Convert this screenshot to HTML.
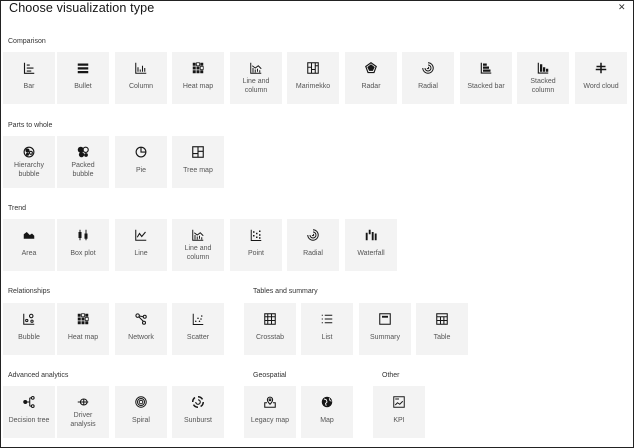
<!DOCTYPE html>
<html><head><meta charset="utf-8"><style>
*{margin:0;padding:0;box-sizing:border-box}
html,body{width:634px;height:448px;overflow:hidden;background:#fff}
body{position:relative;font-family:"Liberation Sans",sans-serif}
.b{position:absolute;left:0;top:0;width:634px;height:448px;border:1px solid #222}
.h{position:absolute;left:9px;top:1px;font-size:12.6px;color:#161616;letter-spacing:.1px}
.x{position:absolute;left:618px;top:2px;font-size:9px;color:#333}
.l{position:absolute;font-size:7px;color:#333}
.t{position:absolute;width:52px;height:52px;background:#f3f3f3}
.t svg{position:absolute;left:20px;top:10px;width:12px;height:12px}
.t span{position:absolute;left:0;right:0;top:30px;text-align:center;font-size:7px;line-height:9px;color:#555}
.t span.d{top:25px}
</style></head><body>
<div class="b"></div>
<div class="h">Choose visualization type</div>
<div class="x">✕</div>

<div class="l" style="left:8px;top:38px">Comparison</div>
<div class="t" style="left:3px;top:52px"><svg viewBox="0 0 16 16" fill="none" stroke="#161616" stroke-width="1.5"><path d="M2 1v14h13M5 4h4M5 8h9M5 12h6"/></svg><span>Bar</span></div>
<div class="t" style="left:57px;top:52px"><svg viewBox="0 0 16 16" fill="#161616"><rect x="1" y="2" width="14" height="3"/><rect x="1" y="7" width="14" height="3"/><rect x="1" y="12" width="14" height="3"/></svg><span>Bullet</span></div>
<div class="t" style="left:115px;top:52px"><svg viewBox="0 0 16 16" fill="none" stroke="#161616" stroke-width="1.4"><path d="M1 1v14h14M4 7v6M7 10v3M10 5v8M13 8v5"/></svg><span>Column</span></div>
<div class="t" style="left:172px;top:52px"><svg viewBox="0 0 16 16" fill="#161616"><rect x="1" y="1" width="4" height="4"/><rect x="6" y="1" width="4" height="4" fill="none" stroke="#161616"/><rect x="11" y="1" width="4" height="4"/><rect x="1" y="6" width="4" height="4"/><rect x="6" y="6" width="4" height="4"/><rect x="11" y="6" width="4" height="4" fill="none" stroke="#161616"/><rect x="1" y="11" width="4" height="4"/><rect x="6" y="11" width="4" height="4"/><rect x="11" y="11" width="4" height="4"/></svg><span>Heat map</span></div>
<div class="t" style="left:230px;top:52px"><svg viewBox="0 0 16 16" fill="none" stroke="#161616" stroke-width="1.3"><path d="M1 1v14h14M4 8v6M7 10v4M10 9v4M13 11v3M3 5l4 3 4-3 4 4"/></svg><span class="d">Line and<br>column</span></div>
<div class="t" style="left:287px;top:52px"><svg viewBox="0 0 16 16" fill="none" stroke="#161616" stroke-width="1.4"><rect x="1" y="1" width="14" height="14"/><path d="M6 1v14M11 1v14M1 7h5M6 10h5M11 5h4"/></svg><span>Marimekko</span></div>
<div class="t" style="left:345px;top:52px"><svg viewBox="0 0 16 16" fill="none" stroke="#161616" stroke-width="1.5"><path d="M8 1l7 5-3 8H4L1 6z"/><path d="M8 4l4 3-2 4H6L4 7z" fill="#161616"/></svg><span>Radar</span></div>
<div class="t" style="left:402px;top:52px"><svg viewBox="0 0 16 16" fill="none" stroke="#161616" stroke-width="1.3"><path d="M8 1a7 7 0 1 1-7 7M8 4a4 4 0 1 1-4 4M8 7a1 1 0 1 1-1 1"/></svg><span>Radial</span></div>
<div class="t" style="left:460px;top:52px"><svg viewBox="0 0 16 16" fill="#161616"><path d="M1 1h1.5v13H15v1.5H1z"/><rect x="4" y="2" width="5" height="3"/><rect x="4" y="6" width="8" height="3"/><rect x="4" y="10" width="10" height="3"/></svg><span>Stacked bar</span></div>
<div class="t" style="left:517px;top:52px"><svg viewBox="0 0 16 16" fill="#161616"><path d="M1 1h1.5v13H15v1.5H1z"/><rect x="4" y="3" width="3" height="10"/><rect x="8" y="7" width="3" height="6"/><rect x="12" y="9" width="3" height="4"/></svg><span class="d">Stacked<br>column</span></div>
<div class="t" style="left:575px;top:52px"><svg viewBox="0 0 16 16" fill="#161616"><rect x="7" y="1" width="2" height="14"/><rect x="2" y="5" width="12" height="2"/><rect x="1" y="9" width="14" height="2"/></svg><span>Word cloud</span></div>

<div class="l" style="left:8px;top:122px">Parts to whole</div>
<div class="t" style="left:3px;top:136px"><svg viewBox="0 0 16 16" fill="none" stroke="#161616" stroke-width="1.5"><circle cx="8" cy="8" r="6.5"/><circle cx="6" cy="6" r="2" fill="#161616"/><circle cx="10.5" cy="9" r="2"/><circle cx="6" cy="11" r="1.3" fill="#161616"/></svg><span class="d">Hierarchy<br>bubble</span></div>
<div class="t" style="left:57px;top:136px"><svg viewBox="0 0 16 16" fill="#161616"><circle cx="5" cy="5" r="4"/><circle cx="11.5" cy="5" r="3.5" fill="none" stroke="#161616" stroke-width="1.5"/><circle cx="6" cy="11.5" r="3.5"/><circle cx="12" cy="12" r="2.5"/></svg><span class="d">Packed<br>bubble</span></div>
<div class="t" style="left:115px;top:136px"><svg viewBox="0 0 16 16" fill="none" stroke="#161616" stroke-width="1.5"><circle cx="8" cy="8" r="6.5"/><path d="M8 2v6h6"/></svg><span>Pie</span></div>
<div class="t" style="left:172px;top:136px"><svg viewBox="0 0 16 16" fill="none" stroke="#161616" stroke-width="1.5"><rect x="1" y="1" width="14" height="14"/><path d="M8 1v14M8 7h7M1 10h7"/></svg><span>Tree map</span></div>

<div class="l" style="left:8px;top:205px">Trend</div>
<div class="t" style="left:3px;top:219px"><svg viewBox="0 0 16 16" fill="#161616"><path d="M1 13V7l4-3 4 4 3-2 3 3v4z"/></svg><span>Area</span></div>
<div class="t" style="left:57px;top:219px"><svg viewBox="0 0 16 16" fill="#161616"><path d="M4 1v14M12 1v14" stroke="#161616" stroke-width="1.3"/><rect x="2" y="4" width="4" height="8"/><rect x="10" y="6" width="4" height="7"/></svg><span>Box plot</span></div>
<div class="t" style="left:115px;top:219px"><svg viewBox="0 0 16 16" fill="none" stroke="#161616" stroke-width="1.4"><path d="M1 1v14h14M3 11l3-5 3 4 5-6"/></svg><span>Line</span></div>
<div class="t" style="left:172px;top:219px"><svg viewBox="0 0 16 16" fill="none" stroke="#161616" stroke-width="1.3"><path d="M1 1v14h14M4 8v6M7 10v4M10 9v4M13 11v3M3 5l4 3 4-3 4 4"/></svg><span class="d">Line and<br>column</span></div>
<div class="t" style="left:230px;top:219px"><svg viewBox="0 0 16 16" fill="#161616"><path d="M1 1h1.3v13.7H15V16H1z"/><rect x="4" y="3" width="2" height="2"/><rect x="4" y="8" width="2" height="2"/><rect x="8" y="5" width="2" height="2"/><rect x="8" y="10" width="2" height="2"/><rect x="12" y="2" width="2" height="2"/><rect x="12" y="7" width="2" height="2"/><rect x="12" y="11" width="2" height="2"/></svg><span>Point</span></div>
<div class="t" style="left:287px;top:219px"><svg viewBox="0 0 16 16" fill="none" stroke="#161616" stroke-width="1.3"><path d="M8 1a7 7 0 1 1-7 7M8 4a4 4 0 1 1-4 4M8 7a1 1 0 1 1-1 1"/></svg><span>Radial</span></div>
<div class="t" style="left:345px;top:219px"><svg viewBox="0 0 16 16" fill="#161616"><rect x="1" y="5" width="2.5" height="10"/><rect x="5" y="1" width="2.5" height="6"/><rect x="9" y="4" width="2.5" height="11"/><rect x="13" y="6" width="2.5" height="9"/></svg><span>Waterfall</span></div>

<div class="l" style="left:8px;top:288px">Relationships</div>
<div class="t" style="left:3px;top:303px"><svg viewBox="0 0 16 16" fill="none" stroke="#161616" stroke-width="1.4"><path d="M1 1v14h14"/><circle cx="11" cy="4" r="2.3"/><circle cx="5" cy="10" r="1.5"/><circle cx="12" cy="11" r="1.5"/></svg><span>Bubble</span></div>
<div class="t" style="left:57px;top:303px"><svg viewBox="0 0 16 16" fill="#161616"><rect x="1" y="1" width="4" height="4"/><rect x="6" y="1" width="4" height="4" fill="none" stroke="#161616"/><rect x="11" y="1" width="4" height="4"/><rect x="1" y="6" width="4" height="4"/><rect x="6" y="6" width="4" height="4"/><rect x="11" y="6" width="4" height="4" fill="none" stroke="#161616"/><rect x="1" y="11" width="4" height="4"/><rect x="6" y="11" width="4" height="4"/><rect x="11" y="11" width="4" height="4"/></svg><span>Heat map</span></div>
<div class="t" style="left:115px;top:303px"><svg viewBox="0 0 16 16" fill="none" stroke="#161616" stroke-width="1.4"><circle cx="3.5" cy="3.5" r="2.3"/><circle cx="13" cy="5" r="2"/><circle cx="12" cy="13" r="2"/><path d="M5 5l6 6M6 4l5 1"/></svg><span>Network</span></div>
<div class="t" style="left:172px;top:303px"><svg viewBox="0 0 16 16" fill="#161616"><path d="M1 1h1.3v13.7H15V16H1z"/><circle cx="5" cy="11" r="1"/><circle cx="8" cy="7" r="1"/><circle cx="10" cy="11" r="1"/><circle cx="13" cy="4" r="1"/><circle cx="12" cy="8" r="1"/></svg><span>Scatter</span></div>

<div class="l" style="left:253px;top:288px">Tables and summary</div>
<div class="t" style="left:244px;top:303px"><svg viewBox="0 0 16 16" fill="none" stroke="#161616" stroke-width="1.4"><rect x="1" y="1" width="14" height="14"/><path d="M1 5h14M1 10h14M5 1v14M10 1v14"/></svg><span>Crosstab</span></div>
<div class="t" style="left:301px;top:303px"><svg viewBox="0 0 16 16" fill="none" stroke="#161616" stroke-width="1.4"><path d="M5 3h10M5 8h10M5 13h10M1 3h1.5M1 8h1.5M1 13h1.5"/></svg><span>List</span></div>
<div class="t" style="left:359px;top:303px"><svg viewBox="0 0 16 16" fill="none" stroke="#161616" stroke-width="1.4"><rect x="1" y="1" width="14" height="14"/><path d="M4 5h8" stroke-width="2.5"/></svg><span>Summary</span></div>
<div class="t" style="left:416px;top:303px"><svg viewBox="0 0 16 16" fill="none" stroke="#161616" stroke-width="1.4"><rect x="1" y="1" width="14" height="14"/><path d="M1 5h14M1 10h14M6 5v10M10.5 5v10"/></svg><span>Table</span></div>

<div class="l" style="left:8px;top:372px">Advanced analytics</div>
<div class="t" style="left:3px;top:386px"><svg viewBox="0 0 16 16" fill="none" stroke="#161616" stroke-width="1.4"><circle cx="3" cy="8" r="2" fill="#161616"/><circle cx="13" cy="2.5" r="1.8"/><circle cx="13" cy="13.5" r="1.8"/><path d="M3 8h6M9 2.5v11M9 2.5h2M9 13.5h2"/></svg><span>Decision tree</span></div>
<div class="t" style="left:57px;top:386px"><svg viewBox="0 0 16 16" fill="none" stroke="#161616" stroke-width="1.4"><ellipse cx="9" cy="8" rx="4.5" ry="4"/><path d="M1 8h14M9 4v8"/></svg><span class="d">Driver<br>analysis</span></div>
<div class="t" style="left:115px;top:386px"><svg viewBox="0 0 16 16" fill="none" stroke="#161616" stroke-width="1.3"><circle cx="8" cy="8" r="7"/><circle cx="8" cy="8" r="4.7"/><circle cx="8" cy="8" r="2.4"/></svg><span>Spiral</span></div>
<div class="t" style="left:172px;top:386px"><svg viewBox="0 0 16 16" fill="none" stroke="#161616" stroke-width="2"><path d="M8 1a7 7 0 0 1 6 3.5M15 8a7 7 0 0 1-3.5 6M8 15a7 7 0 0 1-6-3.5M1 8a7 7 0 0 1 3-6"/><path d="M8 5a3 3 0 1 1-3 3" stroke-width="1.5"/></svg><span>Sunburst</span></div>

<div class="l" style="left:253px;top:372px">Geospatial</div>
<div class="t" style="left:244px;top:386px"><svg viewBox="0 0 16 16" fill="none" stroke="#161616" stroke-width="1.4"><path d="M8 11S4.5 7.5 4.5 5a3.5 3.5 0 0 1 7 0C11.5 7.5 8 11 8 11z"/><circle cx="8" cy="5" r="1.2"/><path d="M4 9H1v6h14V9h-3"/></svg><span>Legacy map</span></div>
<div class="t" style="left:301px;top:386px"><svg viewBox="0 0 16 16" fill="#161616"><circle cx="8" cy="8" r="7"/><path d="M4 4l3 1 1 3-2 2 1 3" stroke="#f3f3f3" stroke-width="1.3" fill="none"/><path d="M11 3l1 3 2 1" stroke="#f3f3f3" stroke-width="1.3" fill="none"/></svg><span>Map</span></div>

<div class="l" style="left:382px;top:372px">Other</div>
<div class="t" style="left:373px;top:386px"><svg viewBox="0 0 16 16" fill="none" stroke="#161616" stroke-width="1.3"><rect x="1" y="1" width="14" height="14"/><path d="M3 4h5"/><path d="M3 12l3-3 3 2 4-4"/></svg><span>KPI</span></div>
</body></html>
